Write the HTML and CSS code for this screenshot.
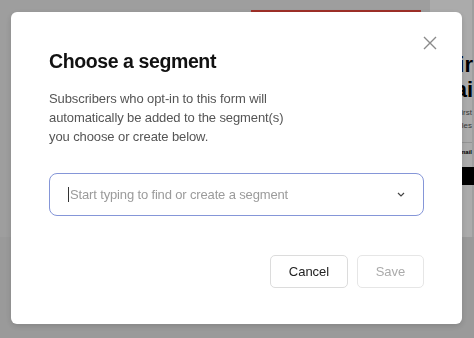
FILE: index.html
```html
<!DOCTYPE html>
<html lang="en">
<head>
<meta charset="utf-8">
<title>Choose a segment</title>
<link rel="stylesheet" href="styles.css">
</head>
<body>
<div class="page">
  <div class="featured"></div>
  <aside class="promo">
    <h2 class="promo-title">Spring Fair<br>Dubai</h2>
    <p class="promo-text">Be the first<br>offers, sales</p>
    <div class="promo-field">Email</div>
    <div class="promo-btn"></div>
  </aside>
</div>

<div class="overlay">
  <div class="modal" role="dialog" aria-labelledby="modal-title">
    <button class="close" aria-label="Close">
      <svg width="14" height="14" viewBox="0 0 14 14"><path d="M1 1L13 13M13 1L1 13" stroke="#8a8a8a" stroke-width="1.4" fill="none"/></svg>
    </button>
    <h1 id="modal-title" class="title">Choose a segment</h1>
    <p class="desc">Subscribers who opt-in to this form will automatically be added to the segment(s) you choose or create below.</p>
    <div class="select">
      <span class="caret"></span>
      <span class="placeholder">Start typing to find or create a segment</span>
      <svg class="chevron" width="8" height="5" viewBox="0 0 8 5"><path d="M1 1L4 4L7 1" stroke="#444" stroke-width="1.2" fill="none"/></svg>
    </div>
    <div class="actions">
      <button class="btn btn-cancel">Cancel</button>
      <button class="btn btn-save" disabled>Save</button>
    </div>
  </div>
</div>
</body>
</html>
```
FILE: styles.css
```css
* { box-sizing: border-box; }
html, body { margin: 0; height: 100%; }
body {
  background: #e6e6e6;
  font-family: "Liberation Sans", Arial, sans-serif;
  overflow: hidden;
}
.page {
  display: flex;
  align-items: flex-start;
  height: 100%;
  background: linear-gradient(#ececec 0 237px, #e6e6e6 237px);
}
.featured {
  margin: 10px 0 0 251px;
  width: 170px;
  height: 200px;
  border-top: 3px solid #ef483c;
  background: #fafafa;
}
.promo {
  margin-left: 9px;
  width: 42px;
  height: 237px;
  background: #fff;
  padding-top: 52px;
  white-space: nowrap;
  color: #000;
  display: flex;
  flex-direction: column;
  align-items: flex-end;
  text-align: right;
}
.promo-title {
  margin: 0 -1px 0 0;
  font-size: 22px;
  line-height: 25px;
  font-weight: 700;
}
.promo-text {
  margin: 4px 0 0;
  font-size: 8px;
  line-height: 13px;
  color: #555;
}
.promo-field {
  margin-top: 10px;
  width: 60px;
  border-top: 1px solid #ddd;
  padding-top: 6px;
  font-size: 6px;
  font-weight: 700;
}
.promo-btn {
  margin: 12px -2px 0 0;
  width: 62px;
  height: 18px;
  background: #000;
}
.overlay {
  position: fixed;
  inset: 0;
  background: rgba(0, 0, 0, 0.33);
  padding: 12px 12px 14px 11px;
}
.modal {
  position: relative;
  width: 451px;
  height: 312px;
  background: #fff;
  border-radius: 6px;
  padding: 37px 38px 0 38px;
  box-shadow: 0 2px 6px rgba(0,0,0,0.15);
}
.close {
  position: absolute;
  top: 24px;
  right: 25px;
  width: 14px;
  height: 14px;
  padding: 0;
  border: 0;
  background: none;
  display: flex;
}
.title {
  margin: 0;
  font-size: 19.5px;
  line-height: 24px;
  font-weight: 700;
  letter-spacing: -0.4px;
  color: #111;
}
.desc {
  margin: 16px 0 0;
  font-size: 13px;
  line-height: 19px;
  letter-spacing: -0.1px;
  color: #555;
  width: 250px;
}
.select {
  margin-top: 27px;
  height: 43px;
  border: 1px solid #8596d8;
  border-radius: 8px;
  display: flex;
  align-items: center;
  padding: 0 18px 0 18px;
}
.caret {
  width: 1px;
  height: 15px;
  background: #333;
  margin-right: 1px;
}
.placeholder {
  flex: 1;
  font-size: 13px;
  letter-spacing: -0.15px;
  color: #9b9b9b;
}
.chevron { display: block; }
.actions {
  margin-top: 39px;
  display: flex;
  justify-content: flex-end;
  gap: 9px;
}
.btn {
  height: 33px;
  padding: 0;
  font-family: inherit;
  font-size: 13px;
  color: #222;
  background: #fff;
  border: 1px solid #dcdcdc;
  border-radius: 5px;
}
.btn-cancel { width: 78px; }
.btn-save {
  width: 67px;
  color: #ababab;
  border-color: #e6e6e6;
}
```
